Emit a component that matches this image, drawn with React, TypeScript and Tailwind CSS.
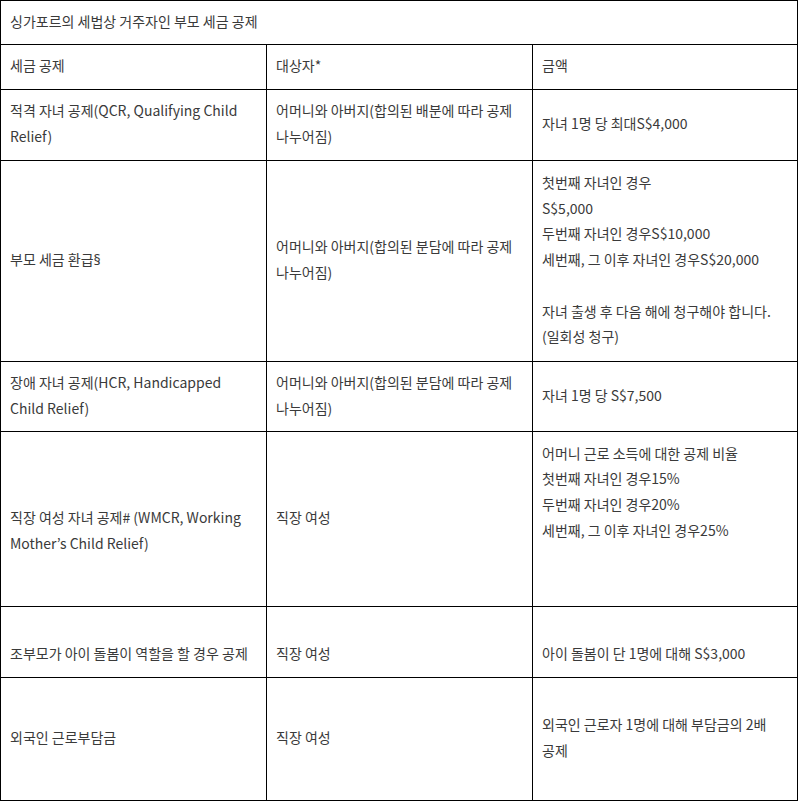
import type { FC } from 'react'

type Cell = string[]

type Row = {
  height: string
  cells: [Cell, Cell, Cell]
}

// "" is an empty line kept from the source content
const ROWS: Row[] = [
  {
    height: 'h-[71px]',
    cells: [
      ['적격 자녀 공제(QCR, Qualifying Child', 'Relief)'],
      ['어머니와 아버지(합의된 배분에 따라 공제', '나누어짐)'],
      ['자녀 1명 당 최대S$4,000'],
    ],
  },
  {
    height: 'h-[201px]',
    cells: [
      ['부모 세금 환급§'],
      ['어머니와 아버지(합의된 분담에 따라 공제', '나누어짐)'],
      [
        '첫번째 자녀인 경우',
        'S$5,000',
        '두번째 자녀인 경우S$10,000',
        '세번째, 그 이후 자녀인 경우S$20,000',
        '',
        '자녀 출생 후 다음 해에 청구해야 합니다.',
        '(일회성 청구)',
      ],
    ],
  },
  {
    height: 'h-[70px]',
    cells: [
      ['장애 자녀 공제(HCR, Handicapped', 'Child Relief)'],
      ['어머니와 아버지(합의된 분담에 따라 공제', '나누어짐)'],
      ['자녀 1명 당 S$7,500'],
    ],
  },
  {
    height: 'h-[175px]',
    cells: [
      ['', '직장 여성 자녀 공제# (WMCR, Working', 'Mother’s Child Relief)'],
      ['직장 여성'],
      [
        '어머니 근로 소득에 대한 공제 비율',
        '첫번째 자녀인 경우15%',
        '두번째 자녀인 경우20%',
        '세번째, 그 이후 자녀인 경우25%',
        '',
        '',
      ],
    ],
  },
  {
    height: 'h-[71px]',
    cells: [
      ['', '조부모가 아이 돌봄이 역할을 할 경우 공제'],
      ['', '직장 여성'],
      ['', '아이 돌봄이 단 1명에 대해 S$3,000'],
    ],
  },
  {
    height: 'h-[123px]',
    cells: [
      ['외국인 근로부담금'],
      ['직장 여성'],
      ['', '외국인 근로자 1명에 대해 부담금의 2배', '공제', ''],
    ],
  },
]

// the CJK font draws § full width, so take it from Noto Sans
const Line: FC<{ text: string }> = ({ text }) => {
  if (text === '') return <div>{'\u00a0'}</div>
  const parts = text.split('§')
  if (parts.length === 1) return <div>{text}</div>
  return (
    <div>
      {parts[0]}
      <span style={{ fontFamily: '"Noto Sans", sans-serif' }}>§</span>
      {parts[1]}
    </div>
  )
}

const cellClass =
  'border border-black px-[9px] pt-0 pb-[2px] align-middle text-left font-normal'

export default function App() {
  return (
    <div className="bg-white">
      <table
        className="w-[798px] table-fixed border-collapse text-[14px] leading-[25.8px] text-[#3a3a3a]"
        style={{ fontFamily: '"Noto Sans CJK KR", "Noto Sans", sans-serif' }}
      >
        <colgroup>
          <col className="w-[266px]" />
          <col className="w-[266px]" />
          <col />
        </colgroup>
        <thead>
          <tr className="h-[44px]">
            <th colSpan={3} className={cellClass}>
              싱가포르의 세법상 거주자인 부모 세금 공제
            </th>
          </tr>
          <tr className="h-[45px]">
            <th className={cellClass}>세금 공제</th>
            <th className={cellClass}>대상자*</th>
            <th className={cellClass}>금액</th>
          </tr>
        </thead>
        <tbody>
          {ROWS.map((row, idx) => (
            <tr key={idx} className={row.height}>
              {row.cells.map((cell, cIdx) => (
                <td key={cIdx} className={cellClass}>
                  {cell.map((line, lIdx) => (
                    <Line key={lIdx} text={line} />
                  ))}
                </td>
              ))}
            </tr>
          ))}
        </tbody>
      </table>
    </div>
  )
}
